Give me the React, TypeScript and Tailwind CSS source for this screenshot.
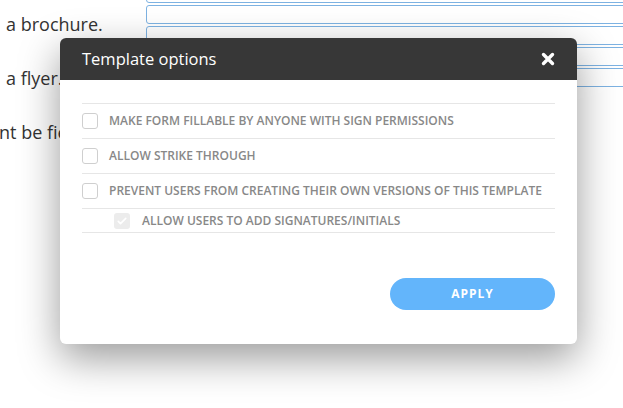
import React from "react"

const options = [
  { label: "MAKE FORM FILLABLE BY ANYONE WITH SIGN PERMISSIONS" },
  { label: "ALLOW STRIKE THROUGH" },
  { label: "PREVENT USERS FROM CREATING THEIR OWN VERSIONS OF THIS TEMPLATE" },
]

function Checkbox({ disabled }: { disabled?: boolean }) {
  if (disabled) {
    return (
      <span className="flex h-4 w-4 shrink-0 items-center justify-center rounded-[3px] bg-[#ececec]">
        <svg viewBox="0 0 16 16" className="h-3 w-3">
          <path d="M3 8.5l3 3 7-7" fill="none" stroke="#ffffff" strokeWidth="2.2" strokeLinecap="round" strokeLinejoin="round" />
        </svg>
      </span>
    )
  }
  return <span className="block h-4 w-4 shrink-0 rounded-[3px] border border-[#cfcfcf] bg-white" />
}

export default function App() {
  return (
    <div className="relative h-[408px] w-[623px] overflow-hidden bg-white font-['Open_Sans',sans-serif]">
      {/* page behind the dialog */}
      <div className="flex">
        <div className="flex w-[146px] shrink-0 flex-col gap-[28px] pt-[11px] text-[18px] leading-[26px] text-[#333] whitespace-nowrap">
          <span className="pl-[6px]">a brochure.</span>
          <span className="pl-[6px]">a flyer.</span>
          <span className="-ml-[1px]">nt be field.</span>
        </div>
        <div className="-mt-[16px] flex flex-1 flex-col gap-[2px]">
          {[0, 1, 2, 3, 4].map((i) => (
            <div key={i} className="h-[19px] w-[520px] rounded-[3px] border border-[#7db2e2] bg-white" />
          ))}
        </div>
      </div>

      {/* dialog */}
      <div className="absolute left-[60px] top-[38px] w-[517px] rounded-[6px] bg-white shadow-[0_14px_40px_rgba(0,0,0,0.4)]">
        <div className="flex h-[42px] items-center justify-between rounded-t-[6px] bg-[#373737] px-[22px]">
          <span className="text-[16.5px] text-white">Template options</span>
          <svg viewBox="0 0 14 14" className="h-[14px] w-[14px]">
            <path d="M2.5 2.5l9 9M11.5 2.5l-9 9" stroke="#ffffff" strokeWidth="3.4" strokeLinecap="round" />
          </svg>
        </div>
        <div className="px-[22px] pt-[23px] pb-[34px]">
          <div className="border-t border-[#e6e6e6]">
            {options.map((o) => (
              <div key={o.label} className="flex h-[35px] items-center gap-[11px] border-b border-[#e6e6e6]">
                <Checkbox />
                <span className="text-[12px] font-semibold text-[#888]">{o.label}</span>
              </div>
            ))}
            <div className="flex h-[24px] items-center gap-[12px] border-b border-[#e6e6e6] pl-[32px]">
              <Checkbox disabled />
              <span className="text-[12px] font-semibold text-[#888]">ALLOW USERS TO ADD SIGNATURES/INITIALS</span>
            </div>
          </div>
          <div className="mt-[45px] flex justify-end">
            <button className="h-[32px] w-[165px] rounded-full bg-[#63b5fb] text-[12px] font-bold tracking-[1px] text-white">
              APPLY
            </button>
          </div>
        </div>
      </div>
    </div>
  )
}
